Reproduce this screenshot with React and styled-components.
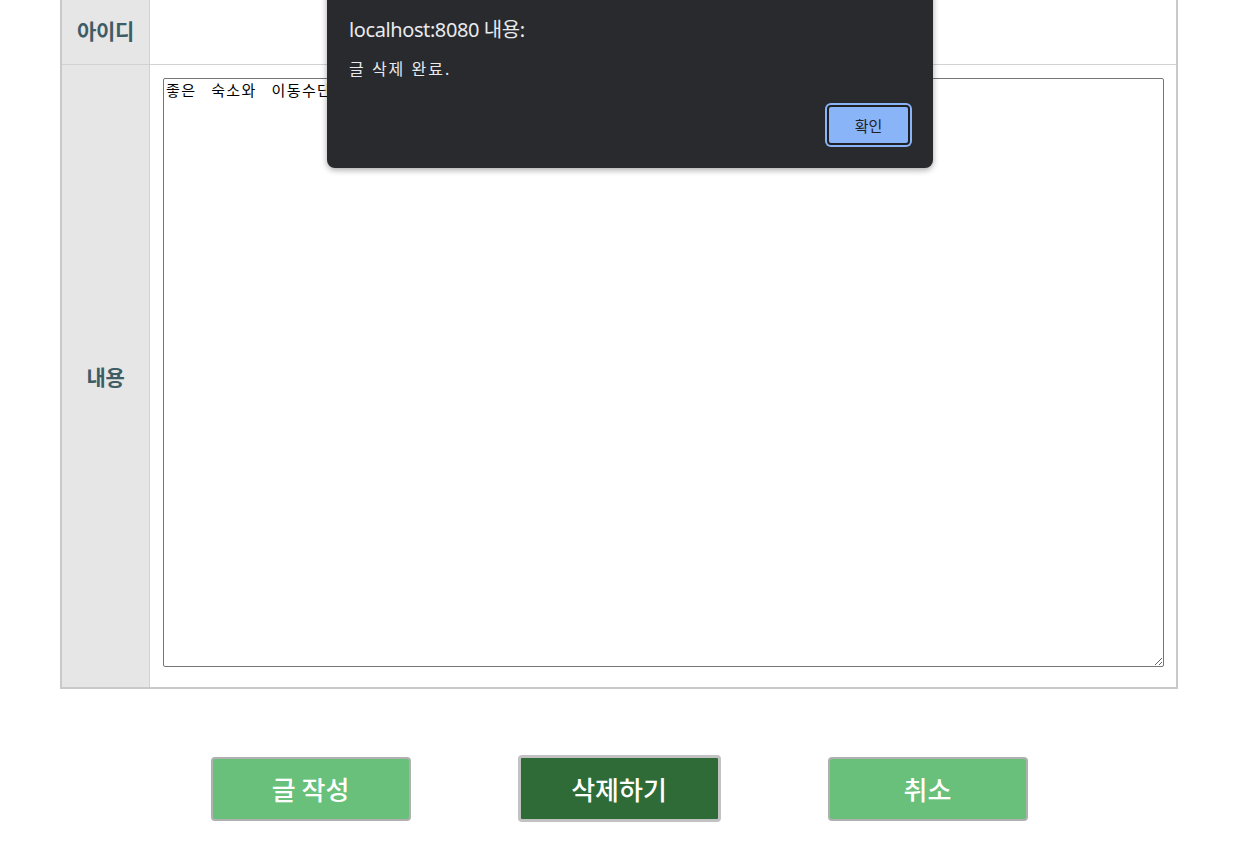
import React from "react";
import styled, { createGlobalStyle } from "styled-components";

const Global = createGlobalStyle`
  html, body { margin: 0; padding: 0; background: #fff; overflow: hidden; }
  body { font-family: "Noto Sans CJK KR", "Noto Sans", sans-serif; }
`;

const Page = styled.div`
  position: relative;
  width: 1244px;
  height: 847px;
  overflow: hidden;
`;

const Scroller = styled.div`
  margin-top: -6px;
  padding-left: 60px;
`;

const Table = styled.div`
  width: 1118px;
  box-sizing: border-box;
  display: grid;
  grid-template-columns: 88px 1fr;
  grid-template-rows: 71px 622px;
  border: 2px solid #c9c9c9;
  border-top: none;
`;

const Label = styled.div`
  background: #e6e6e6;
  border-right: 1px solid #d2d2d2;
  border-bottom: ${(p) => (p.$last ? "none" : "1px solid #d2d2d2")};
  display: flex;
  align-items: center;
  justify-content: center;
  padding-top: ${(p) => p.$pt || 0}px;
  font-weight: 700;
  font-size: 21px;
  color: #3e5c66;
  letter-spacing: -0.4px;
`;

const Cell = styled.div`
  border-bottom: ${(p) => (p.$last ? "none" : "1px solid #d2d2d2")};
  padding: 13px 12px 20px 13px;
  box-sizing: border-box;
  display: flex;
`;

const TextArea = styled.textarea`
  flex: 1;
  box-sizing: border-box;
  border: 1px solid #767676;
  border-radius: 2px;
  resize: both;
  padding: 2px 2px;
  margin: 0;
  font-family: "Noto Sans CJK KR", sans-serif;
  font-size: 15px;
  letter-spacing: 1.4px;
  word-spacing: 10px;
  line-height: 17px;
  color: #000;
  outline: none;
`;

const ButtonRow = styled.div`
  display: flex;
  justify-content: center;
  align-items: center;
  gap: 107px;
  margin-top: 66px;
  width: 1118px;
`;

const GreenButton = styled.button`
  box-sizing: border-box;
  width: ${(p) => (p.$active ? 203 : 200)}px;
  height: ${(p) => (p.$active ? 67 : 64)}px;
  background: ${(p) => (p.$active ? "#2e6b37" : "#69c07a")};
  border: ${(p) => (p.$active ? "3px solid #c2c2c2" : "2px solid #b0b0b0")};
  border-radius: 4px;
  color: #fff;
  font-family: "Noto Sans CJK KR", sans-serif;
  font-size: 26px;
  font-weight: 500;
  padding: 0;
  cursor: pointer;
`;

const Dialog = styled.div`
  position: absolute;
  left: 327px;
  top: -10px;
  width: 606px;
  box-sizing: border-box;
  padding: 27px 21px 21px 22px;
  background: #292a2d;
  border-radius: 0 0 8px 8px;
  box-shadow: 0 2px 6px rgba(0, 0, 0, 0.35);
  display: flex;
  flex-direction: column;
`;

const Title = styled.div`
  color: #e8eaed;
  font-family: "Noto Sans", "Noto Sans CJK KR", sans-serif;
  font-size: 20px;
  line-height: 26px;
  letter-spacing: -0.4px;
`;

const Message = styled.div`
  color: #e8eaed;
  font-family: "Noto Sans", "Noto Sans CJK KR", sans-serif;
  font-size: 16px;
  line-height: 20px;
  letter-spacing: 2px;
  margin-top: 16px;
`;

const Actions = styled.div`
  display: flex;
  justify-content: flex-end;
  margin-top: 24px;
`;

const OkButton = styled.button`
  box-sizing: border-box;
  width: 83px;
  height: 40px;
  background: #8ab4f8;
  border: 2px solid #202124;
  box-shadow: 0 0 0 2px #8ab4f8;
  border-radius: 4px;
  color: #202124;
  font-family: "Noto Sans CJK KR", sans-serif;
  font-size: 15px;
  padding: 0;
  margin: 2px 2px 2px 0;
`;

export default function App() {
  return (
    <Page>
      <Global />
      <Scroller>
        <Table>
          <Label $pt={2}>아이디</Label>
          <Cell />
          <Label $last>내용</Label>
          <Cell $last>
            <TextArea defaultValue="좋은 숙소와 이동수단 덕분에 편안한 여행이었습니다." />
          </Cell>
        </Table>
        <ButtonRow>
          <GreenButton>글 작성</GreenButton>
          <GreenButton $active>삭제하기</GreenButton>
          <GreenButton>취소</GreenButton>
        </ButtonRow>
      </Scroller>
      <Dialog>
        <Title>localhost:8080 내용:</Title>
        <Message>글 삭제 완료.</Message>
        <Actions>
          <OkButton>확인</OkButton>
        </Actions>
      </Dialog>
    </Page>
  );
}
